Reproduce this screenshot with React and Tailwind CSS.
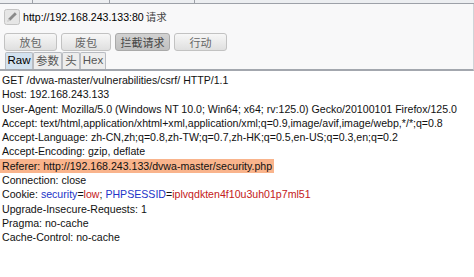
import React from "react";

const F = { fontFamily: '"Liberation Sans", Arial, "Noto Sans CJK SC", sans-serif' };
const CJK = { fontFamily: '"Noto Sans CJK SC", sans-serif' };

function Btn({ children, pressed, w }) {
  return (
    <div
      className={
        "h-[18px] flex items-center justify-center rounded-[3px] border text-[11px] whitespace-nowrap " +
        (pressed
          ? "border-[#a9a9a9] bg-gradient-to-b from-[#d2d2d2] to-[#bfbfbf] text-[#444]"
          : "border-[#c2c2c2] bg-gradient-to-b from-[#f7f7f7] to-[#dfdfdf] text-[#666]")
      }
      style={{ width: w, ...CJK }}
    >
      {children}
    </div>
  );
}

function Tab({ children, active, w, cjk }) {
  return (
    <div
      className={
        "h-[17px] flex items-center justify-center border border-b-0 border-[#b9bcc2] rounded-t-[2px] text-[11.5px] " +
        (active ? "bg-[#d3e2ef] text-black" : "bg-[#ededed] text-[#555]")
      }
      style={{ width: w, ...(cjk ? CJK : {}) }}
    >
      {children}
    </div>
  );
}

export default function App() {
  const lines = [
    "GET /dvwa-master/vulnerabilities/csrf/ HTTP/1.1",
    "Host: 192.168.243.133",
    "User-Agent: Mozilla/5.0 (Windows NT 10.0; Win64; x64; rv:125.0) Gecko/20100101 Firefox/125.0",
    "Accept: text/html,application/xhtml+xml,application/xml;q=0.9,image/avif,image/webp,*/*;q=0.8",
    "Accept-Language: zh-CN,zh;q=0.8,zh-TW;q=0.7,zh-HK;q=0.5,en-US;q=0.3,en;q=0.2",
    "Accept-Encoding: gzip, deflate",
  ];
  const lines2 = ["Upgrade-Insecure-Requests: 1", "Pragma: no-cache", "Cache-Control: no-cache"];
  return (
    <div className="w-[474px] h-[277px] bg-white overflow-hidden" style={F}>
      {/* top strip with tabs */}
      <div className="h-[4px] flex border-b border-[#9da1a8] bg-[#eceef1]">
        <div className="w-[33px] border-r border-[#9da1a8]" />
        <div className="w-[77px] border-r border-[#9da1a8]" />
        <div className="w-[85px] border-r border-[#9da1a8]" />
      </div>
      {/* panel */}
      <div className="h-[67px] bg-[#f8f8f9] border-b-[2px] border-[#a3a7ae] border-r border-r-[#d0d3d8] flex flex-col">
        <div className="flex items-center h-[16px] pl-[4px] mt-[5px]">
          <svg width="16" height="16" viewBox="0 0 16 16">
            <rect x="0.5" y="0.5" width="15" height="15" rx="2" fill="#e6e6e6" stroke="#c4c4c4" />
            <path d="M3.5 12.5 L4.5 9.5 L10.8 3.2 L12.8 5.2 L6.5 11.5 Z" fill="#8a8a8a" />
            <path d="M3.5 12.5 L4.5 9.5 L6.5 11.5 Z" fill="#d2d2d2" />
          </svg>
          <span className="ml-[3px] text-[10.6px] text-black leading-none">http://192.168.243.133:80</span>
          <span className="ml-[2px] text-[10.5px] text-[#444] leading-none" style={CJK}>请求</span>
        </div>
        <div className="flex items-center gap-[4px] pl-[4px] mt-[8px]">
          <Btn w={53}>放包</Btn>
          <Btn w={50}>废包</Btn>
          <Btn w={55} pressed>拦截请求</Btn>
          <Btn w={53}>行动</Btn>
        </div>
        <div className="flex items-end pl-[5px] mt-auto">
          <Tab active w={28}>Raw</Tab>
          <Tab w={29} cjk>参数</Tab>
          <Tab w={18} cjk>头</Tab>
          <Tab w={26}>Hex</Tab>
        </div>
      </div>
      {/* content */}
      <div className="pt-[2px] pl-[2px] text-[10.6px] leading-[14.3px] text-[#111] whitespace-nowrap">
        {lines.map((l) => (
          <div key={l}>{l}</div>
        ))}
        <div className="-ml-[2px] pl-[2px] w-[274px] bg-[#f9b48c]">Referer: http://192.168.243.133/dvwa-master/security.php</div>
        <div>Connection: close</div>
        <div>
          Cookie: <span className="text-[#2234c8]">security</span>=<span className="text-[#c42020]">low</span>;{" "}
          <span className="text-[#2234c8]">PHPSESSID</span>=<span className="text-[#c42020]">iplvqdkten4f10u3uh01p7ml51</span>
        </div>
        {lines2.map((l) => (
          <div key={l}>{l}</div>
        ))}
      </div>
    </div>
  );
}
